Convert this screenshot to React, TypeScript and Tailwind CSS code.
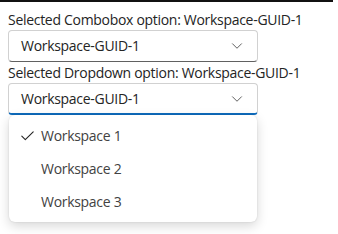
import React from 'react';

const Chevron: React.FC = () => (
  <svg width="12" height="12" viewBox="0 0 12 12" fill="none" className="shrink-0">
    <path d="M1.5 3.75L6 8.25L10.5 3.75" stroke="#616161" strokeWidth="1" strokeLinecap="round" strokeLinejoin="round" />
  </svg>
);

const Check: React.FC = () => (
  <svg width="13" height="10" viewBox="0 0 13 10" fill="none">
    <path d="M0.8 5.2L4.3 8.7L12.2 0.8" stroke="#242424" strokeWidth="1.1" strokeLinecap="round" strokeLinejoin="round" />
  </svg>
);

const options = ['Workspace 1', 'Workspace 2', 'Workspace 3'];

export default function App() {
  return (
    <div className="w-[338px] h-[234px] bg-white text-[#242424] text-[14px] leading-[20px] overflow-hidden" style={{ fontFamily: '"Open Sans", "Noto Sans", sans-serif' }}>
      <div className="w-[333px] h-[2px] bg-[#111]" />
      <div className="px-2 pt-[9px]">
        <div className="h-[18px] leading-[18px] tracking-[-0.3px]">Selected Combobox option: Workspace-GUID-1</div>
        <div className="mt-[1px] w-[250px] h-[32px] rounded-[4px] border border-[#d1d1d1] border-b-[#616161] flex items-center pl-[12px] pr-[14px] justify-between">
          <span className="tracking-[-0.3px]">Workspace-GUID-1</span>
          <Chevron />
        </div>
        <div className="mt-[2px] h-[18px] leading-[18px] tracking-[-0.3px]">Selected Dropdown option: Workspace-GUID-1</div>
        <div className="mt-[1px] w-[250px] h-[32px] rounded-[4px] border border-[#d1d1d1] border-b-2 border-b-[#0f6cbd] flex items-center pl-[12px] pr-[14px] justify-between">
          <span className="tracking-[-0.3px]">Workspace-GUID-1</span>
          <Chevron />
        </div>
        <div className="ml-[1px] w-[248px] rounded-[6px] bg-white shadow-[0_4px_12px_rgba(0,0,0,0.16),0_0_2px_rgba(0,0,0,0.12)] py-[4px]">
          {options.map((o, i) => (
            <div key={o} className="h-[33px] flex items-center pl-[12px] text-[#424242]">
              <span className="w-[20px] flex items-center">{i === 0 && <Check />}</span>
              <span className="tracking-[-0.3px]">{o}</span>
            </div>
          ))}
        </div>
      </div>
    </div>
  );
}
